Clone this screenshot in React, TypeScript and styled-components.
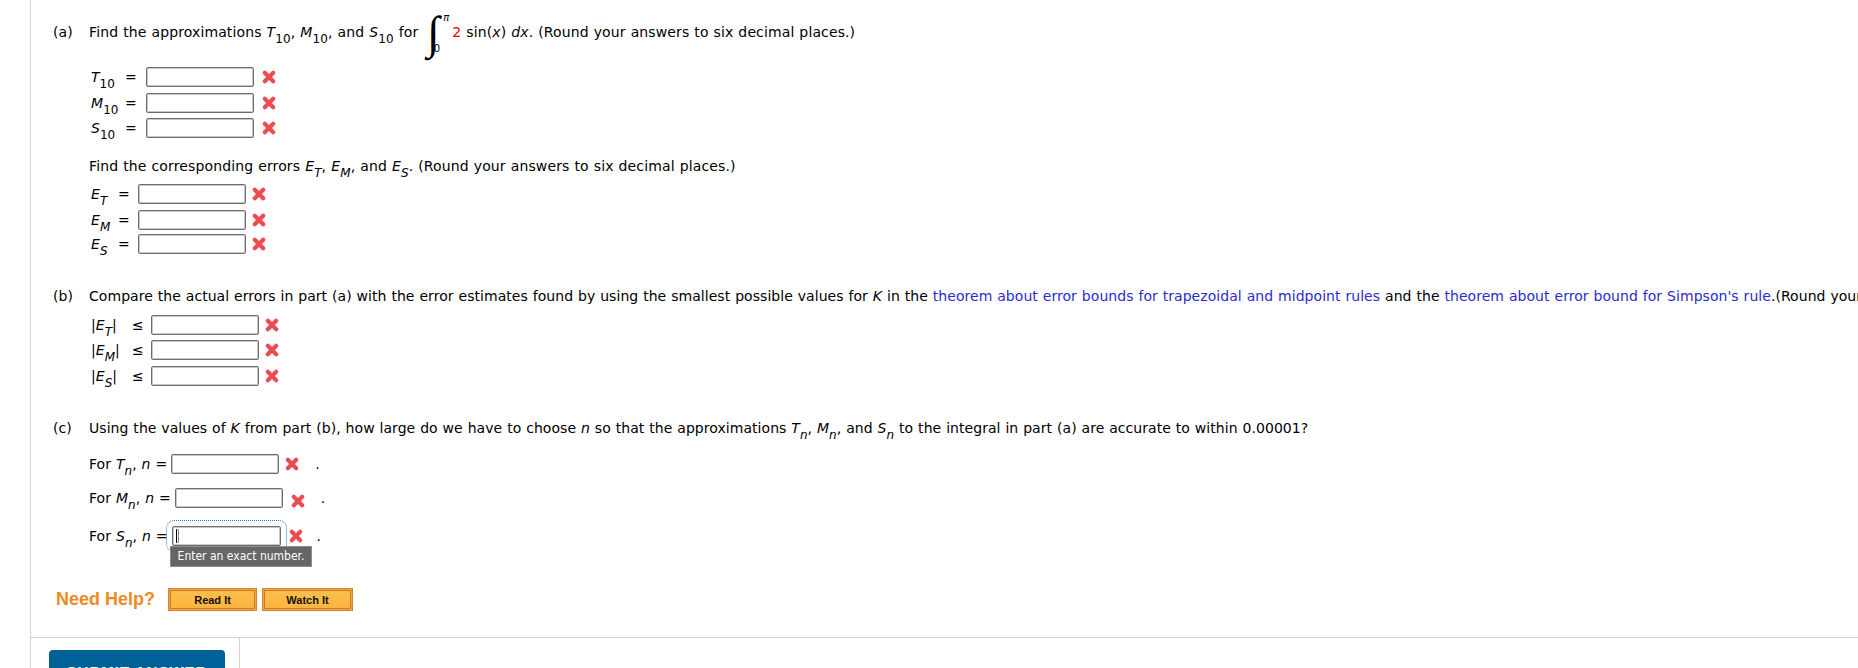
import React from 'react';
import styled, { createGlobalStyle } from 'styled-components';

const GlobalStyle = createGlobalStyle`
  html, body {
    margin: 0;
    padding: 0;
    background: #fff;
    overflow: hidden;
  }

  body {
    font-family: 'DejaVu Sans', Verdana, sans-serif;
    font-size: 14px;
    letter-spacing: 0.05px;
    word-spacing: 0.4px;
    color: #000;
  }
`;

const Page = styled.div`
  width: 1858px;
  height: 668px;
  overflow: hidden;
`;

const QuestionBox = styled.div`
  margin-left: 30px;
  border-left: 1px solid #d4d4d4;
  border-bottom: 1px solid #d4d4d4;
  padding: 12px 0 26px 22px;
`;

const Part = styled.div<{ $top: number }>`
  display: grid;
  grid-template-columns: 36px auto;
  align-items: baseline;
  margin-top: ${({ $top }) => $top}px;
`;

const PartTag = styled.span`
  line-height: 20px;
`;

const Line = styled.div<{ $top?: number; $spacing?: number }>`
  line-height: 20px;
  white-space: nowrap;
  margin-top: ${({ $top = 0 }) => $top}px;
  letter-spacing: ${({ $spacing = 0.05 }) => $spacing}px;
`;

const Var = styled.i`
  font-style: italic;
`;

const Sub = styled.sub`
  font-size: 12px;
  line-height: 0;
  vertical-align: -6px;
`;

const Red = styled.span`
  color: #e60000;
`;

const Link = styled.a`
  color: #2b2bd3;
  text-decoration: none;
  cursor: pointer;
`;

const IntegralWrap = styled.span`
  display: inline-grid;
  grid-template-columns: 20px 9px;
  grid-template-rows: 21px 21px;
  vertical-align: middle;
  margin: 0 0 0 5px;
`;

const IntegralSign = styled.span`
  grid-area: 1 / 1 / 3 / 2;
  justify-self: center;
  font-family: 'Liberation Serif', 'DejaVu Serif', serif;
  font-size: 46px;
  line-height: 42px;
`;

const UpperLimit = styled.span`
  grid-area: 1 / 2 / 2 / 3;
  align-self: start;
  font-size: 10px;
  line-height: 10px;
  margin-top: 1px;
`;

const LowerLimit = styled.span`
  grid-area: 2 / 1 / 3 / 2;
  justify-self: end;
  align-self: end;
  font-size: 10px;
  line-height: 10px;
  margin: 0 3px 0 0;
`;

const AnswerRow = styled.div<{ $top: number }>`
  display: flex;
  align-items: center;
  height: 20px;
  margin-top: ${({ $top }) => $top}px;
  white-space: nowrap;
`;

const Label = styled.span<{ $w: number }>`
  flex: none;
  width: ${({ $w }) => $w}px;
  padding-left: 2px;
  box-sizing: border-box;
`;

const Prompt = styled.span`
  flex: none;
`;

const Relation = styled.span<{ $w: number }>`
  flex: none;
  width: ${({ $w }) => $w}px;
`;

const FieldWrap = styled.span<{ $left?: number }>`
  position: relative;
  display: inline-flex;
  margin-left: ${({ $left = 0 }) => $left}px;
`;

const Field = styled.input<{ $focused?: boolean }>`
  width: ${({ $focused }) => ($focused ? 109 : 108)}px;
  height: 20px;
  box-sizing: border-box;
  border: 1px solid #6e6e6e;
  border-radius: 2px;
  box-shadow: inset 0 0 0 1px #c9c9c9;
  padding: 0 3px;
  font: inherit;
  background: #fff;
  outline: ${({ $focused }) => ($focused ? '1px dotted #1a73d9' : 'none')};
  outline-offset: 5px;
`;

const Caret = styled.span`
  position: absolute;
  left: 4px;
  top: 3px;
  width: 1px;
  height: 14px;
  background: #000;
  box-shadow: 2px 0 0 #8a8a8a;
`;

const Tooltip = styled.span`
  position: absolute;
  left: -2px;
  top: 20px;
  z-index: 2;
  padding: 0 7px;
  height: 21px;
  line-height: 19px;
  box-sizing: border-box;
  background: #666;
  border: 1px solid #8d8d8d;
  color: #fff;
  font-family: 'DejaVu Sans Condensed', 'Liberation Sans', sans-serif;
  font-size: 12px;
  letter-spacing: 0;
  word-spacing: 0;
  white-space: nowrap;
`;

const MarkIcon = styled.svg<{ $left: number; $down?: number }>`
  flex: none;
  margin-left: ${({ $left }) => $left}px;
  position: relative;
  top: ${({ $down = 0 }) => $down}px;
`;

const Period = styled.span<{ $left: number }>`
  margin-left: ${({ $left }) => $left}px;
`;

const HelpRow = styled.div`
  display: flex;
  align-items: center;
  gap: 5px;
  margin-top: 42px;
  padding-left: 3px;
`;

const HelpTitle = styled.span`
  font-family: 'Liberation Sans', Arial, sans-serif;
  font-weight: bold;
  font-size: 18px;
  letter-spacing: 0;
  word-spacing: 0;
  color: #ef8a1f;
  margin-right: 8px;
`;

const HelpButton = styled.button<{ $w: number }>`
  width: ${({ $w }) => $w}px;
  height: 23px;
  padding: 0;
  border: 1px solid #d9812c;
  box-shadow: inset 0 0 0 1px #f7a53c, inset 0 0 0 2px #c97b25;
  background: linear-gradient(#fdc04f, #fbb43d);
  font-family: 'Liberation Sans', Arial, sans-serif;
  font-weight: bold;
  font-size: 11px;
  color: #111;
`;

const BottomBar = styled.div`
  display: flex;
  margin-left: 30px;
`;

const SubmitCell = styled.div`
  width: 210px;
  height: 40px;
  border-left: 1px solid #d4d4d4;
  border-right: 1px solid #d4d4d4;
  padding: 12px 0 0 18px;
  box-sizing: border-box;
`;

const SubmitButton = styled.button`
  width: 176px;
  height: 40px;
  border: none;
  border-radius: 4px;
  background: #006199;
  color: #fff;
  font-family: 'Liberation Sans', Arial, sans-serif;
  font-weight: bold;
  font-size: 15px;
  letter-spacing: 1px;
  padding-top: 4px;
`;

function Mark ({ left, down }: { left: number; down?: number }): React.ReactElement {
  return (
    <MarkIcon
      $down={down}
      $left={left}
      height={16}
      viewBox='0 0 16 16'
      width={16}
    >
      <path
        d='M3.8 3.8 12.2 12.2 M12.2 3.8 3.8 12.2'
        fill='none'
        stroke='#ec4b51'
        strokeLinecap='round'
        strokeWidth={4.2}
      />
    </MarkIcon>
  );
}

interface RowProps {
  label: React.ReactNode;
  labelWidth: number;
  relation: string;
  relationWidth: number;
  top: number;
  markLeft: number;
}

function AnswerLine ({ label, labelWidth, markLeft, relation, relationWidth, top }: RowProps): React.ReactElement {
  return (
    <AnswerRow $top={top}>
      <Label $w={labelWidth}>{label}</Label>
      <Relation $w={relationWidth}>{relation}</Relation>
      <Field type='text' />
      <Mark left={markLeft} />
    </AnswerRow>
  );
}

function Integral (): React.ReactElement {
  return (
    <IntegralWrap>
      <IntegralSign>∫</IntegralSign>
      <UpperLimit><Var>π</Var></UpperLimit>
      <LowerLimit>0</LowerLimit>
    </IntegralWrap>
  );
}

const sub = (main: string, s: string, italicSub = false) => (
  <>
    <Var>{main}</Var>
    <Sub>{italicSub ? <Var>{s}</Var> : s}</Sub>
  </>
);

export default function App (): React.ReactElement {
  return (
    <Page>
      <GlobalStyle />
      <QuestionBox>
        <Part $top={0}>
          <PartTag>(a)</PartTag>
          <div>
            <Line $spacing={0.12}>
              Find the approximations {sub('T', '10')}, {sub('M', '10')}, and {sub('S', '10')} for
              <Integral />
              <Red>2</Red> sin(<Var>x</Var>) <Var>dx</Var>. (Round your answers to six decimal places.)
            </Line>
            <AnswerLine label={sub('T', '10')} labelWidth={36} markLeft={7} relation='=' relationWidth={21} top={13} />
            <AnswerLine label={sub('M', '10')} labelWidth={36} markLeft={7} relation='=' relationWidth={21} top={6} />
            <AnswerLine label={sub('S', '10')} labelWidth={36} markLeft={7} relation='=' relationWidth={21} top={5} />
            <Line $spacing={0.13} $top={18}>
              Find the corresponding errors {sub('E', 'T', true)}, {sub('E', 'M', true)}, and {sub('E', 'S', true)}. (Round your answers to six decimal places.)
            </Line>
            <AnswerLine label={sub('E', 'T', true)} labelWidth={29} markLeft={5} relation='=' relationWidth={20} top={8} />
            <AnswerLine label={sub('E', 'M', true)} labelWidth={29} markLeft={5} relation='=' relationWidth={20} top={6} />
            <AnswerLine label={sub('E', 'S', true)} labelWidth={29} markLeft={5} relation='=' relationWidth={20} top={4} />
          </div>
        </Part>

        <Part $top={32}>
          <PartTag>(b)</PartTag>
          <div>
            <Line>
              Compare the actual errors in part (a) with the error estimates found by using the smallest possible values for <Var>K</Var> in the <Link>theorem about error bounds for trapezoidal and midpoint rules</Link> and the <Link>theorem about error bound for Simpson&apos;s rule</Link>.(Round your answers to six decimal places.)
            </Line>
            <AnswerLine label={<>|{sub('E', 'T', true)}|</>} labelWidth={43} markLeft={5} relation='≤' relationWidth={19} top={9} />
            <AnswerLine label={<>|{sub('E', 'M', true)}|</>} labelWidth={43} markLeft={5} relation='≤' relationWidth={19} top={5} />
            <AnswerLine label={<>|{sub('E', 'S', true)}|</>} labelWidth={43} markLeft={5} relation='≤' relationWidth={19} top={6} />
          </div>
        </Part>

        <Part $top={32}>
          <PartTag>(c)</PartTag>
          <div>
            <Line>
              Using the values of <Var>K</Var> from part (b), how large do we have to choose <Var>n</Var> so that the approximations {sub('T', 'n', true)}, {sub('M', 'n', true)}, and {sub('S', 'n', true)} to the integral in part (a) are accurate to within 0.00001?
            </Line>
            <AnswerRow $top={16}>
              <Prompt>For {sub('T', 'n', true)}, <Var>n</Var> =</Prompt>
              <FieldWrap $left={4}><Field type='text' /></FieldWrap>
              <Mark left={5} />
              <Period $left={15}>.</Period>
            </AnswerRow>
            <AnswerRow $top={14}>
              <Prompt>For {sub('M', 'n', true)}, <Var>n</Var> =</Prompt>
              <FieldWrap $left={4}><Field type='text' /></FieldWrap>
              <Mark down={3} left={7} />
              <Period $left={15}>.</Period>
            </AnswerRow>
            <AnswerRow $top={18}>
              <Prompt>For {sub('S', 'n', true)}, <Var>n</Var> =</Prompt>
              <FieldWrap $left={4}>
                <Field $focused type='text' />
                <Caret />
                <Tooltip>Enter an exact number.</Tooltip>
              </FieldWrap>
              <Mark left={7} />
              <Period $left={13}>.</Period>
            </AnswerRow>
          </div>
        </Part>

        <HelpRow>
          <HelpTitle>Need Help?</HelpTitle>
          <HelpButton $w={89}>Read It</HelpButton>
          <HelpButton $w={91}>Watch It</HelpButton>
        </HelpRow>
      </QuestionBox>

      <BottomBar>
        <SubmitCell>
          <SubmitButton>SUBMIT ANSWER</SubmitButton>
        </SubmitCell>
      </BottomBar>
    </Page>
  );
}
